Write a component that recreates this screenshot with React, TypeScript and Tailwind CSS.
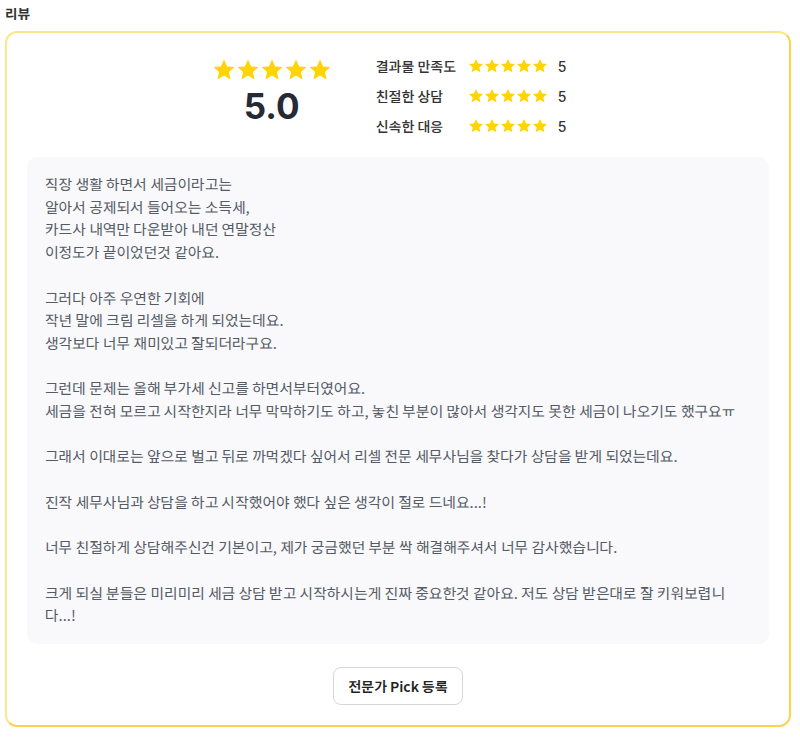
import React from 'react'

const FONT = '"Noto Sans KR", "Noto Sans CJK KR", "Noto Sans", sans-serif'

function Star({ size }: { size: number }) {
  return (
    <svg width={size} height={size} viewBox="0 0 24 24" className="shrink-0">
      <path
        fill="#FFD400"
        d="M12 1.5l3.1 6.9 7.4.7-5.6 5 1.7 7.4L12 17.6l-6.6 3.9 1.7-7.4-5.6-5 7.4-.7z"
      />
    </svg>
  )
}

function Stars({ size, count = 5 }: { size: number; count?: number }) {
  return (
    <div className="flex items-center">
      {Array.from({ length: count }).map((_, i) => (
        <Star key={i} size={size} />
      ))}
    </div>
  )
}

const scores = [
  { label: '결과물 만족도', value: 5 },
  { label: '친절한 상담', value: 5 },
  { label: '신속한 대응', value: 5 },
]

const review = `직장 생활 하면서 세금이라고는
알아서 공제되서 들어오는 소득세,
카드사 내역만 다운받아 내던 연말정산
이정도가 끝이었던것 같아요.

그러다 아주 우연한 기회에
작년 말에 크림 리셀을 하게 되었는데요.
생각보다 너무 재미있고 잘되더라구요.

그런데 문제는 올해 부가세 신고를 하면서부터였어요.
세금을 전혀 모르고 시작한지라 너무 막막하기도 하고, 놓친 부분이 많아서 생각지도 못한 세금이 나오기도 했구요ㅠ

그래서 이대로는 앞으로 벌고 뒤로 까먹겠다 싶어서 리셀 전문 세무사님을 찾다가 상담을 받게 되었는데요.

진작 세무사님과 상담을 하고 시작했어야 했다 싶은 생각이 절로 드네요...!

너무 친절하게 상담해주신건 기본이고, 제가 궁금했던 부분 싹 해결해주셔서 너무 감사했습니다.

크게 되실 분들은 미리미리 세금 상담 받고 시작하시는게 진짜 중요한것 같아요. 저도 상담 받은대로 잘 키워보렵니다...!`

export default function App() {
  return (
    <div className="bg-white w-[800px] px-[5px] pt-[4px] pb-[10px]" style={{ fontFamily: FONT }}>
      <h2 className="text-[13.5px] font-bold text-[#333] leading-[18px]">리뷰</h2>

      <div className="mt-[9px] w-[786px] rounded-[12px] border-2 border-[#fde68a] border-r-[#fcd34d] border-b-[#fcd34d] px-[20px] pt-[25px] pb-[20px]">
        <div className="flex justify-center gap-[44px] pr-[18px]">
          <div className="flex flex-col items-center">
            <Stars size={24} />
            <div
              className="mt-[4px] text-[35px] font-bold leading-[40px] text-[#252a36]"
              style={{ fontFamily: '"Inter", "Noto Sans", sans-serif' }}
            >
              5.0
            </div>
          </div>
          <div className="-mt-[2px] flex flex-col gap-[10px]">
            {scores.map((s) => (
              <div key={s.label} className="flex h-[20px] items-center">
                <span className="w-[92px] text-[14px] font-medium text-[#333]">{s.label}</span>
                <Stars size={16} />
                <span className="ml-[10px] text-[14px] font-medium text-[#333]" style={{ fontFamily: '"Inter", sans-serif' }}>
                  {s.value}
                </span>
              </div>
            ))}
          </div>
        </div>

        <div className="mt-[21px] rounded-[10px] bg-[#f9f9fb] px-[18px] pt-[16px] pb-[17px]">
          <p className="whitespace-pre-line text-[14.8px] leading-[22.7px] text-[#555b66]">{review}</p>
        </div>

        <div className="mt-[23px] flex justify-center">
          <button className="h-[38px] rounded-[8px] border border-[#d4d6db] bg-white px-[14px] text-[14px] font-semibold text-[#222]">
            전문가 Pick 등록
          </button>
        </div>
      </div>
    </div>
  )
}
